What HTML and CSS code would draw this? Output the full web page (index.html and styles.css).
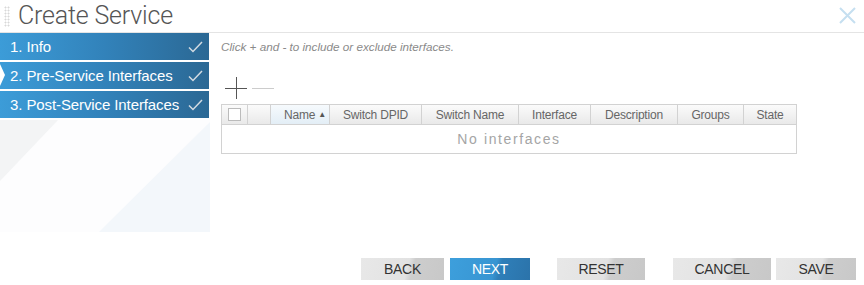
FILE: index.html
```html
<!DOCTYPE html>
<html>
<head>
<meta charset="utf-8">
<link rel="stylesheet" href="styles.css">
</head>
<body>
<div class="header">
  <div class="grip"></div>
  <div class="title">Create Service</div>
  <svg class="close" width="17" height="17" viewBox="0 0 17 17"><path d="M1 1L16 16M16 1L1 16" stroke="#c5dff0" stroke-width="2"/></svg>
</div>
<div class="main">
  <div class="sidebar">
    <div class="step"><span>1. Info</span><svg class="check" width="15" height="12" viewBox="0 0 15 12"><path d="M1 6.5L5 10.5L14 1" fill="none" stroke="#d3dbe2" stroke-width="1.5"/></svg></div>
    <div class="step active"><span>2. Pre-Service Interfaces</span><svg class="check" width="15" height="12" viewBox="0 0 15 12"><path d="M1 6.5L5 10.5L14 1" fill="none" stroke="#d3dbe2" stroke-width="1.5"/></svg></div>
    <div class="step"><span>3. Post-Service Interfaces</span><svg class="check" width="15" height="12" viewBox="0 0 15 12"><path d="M1 6.5L5 10.5L14 1" fill="none" stroke="#d3dbe2" stroke-width="1.5"/></svg></div>
    <svg class="filler" width="210" height="112" viewBox="0 0 210 112"><rect width="210" height="112" fill="#fdfdfe"/><polygon points="0,0 58,0 0,61" fill="#f3f4f5"/><polygon points="210,2 210,112 99,112" fill="#f3f7fb"/></svg>
  </div>
  <div class="content">
    <div class="hint">Click + and - to include or exclude interfaces.</div>
    <div class="tools">
      <svg width="22" height="22" viewBox="0 0 22 22"><path d="M0 11.5H22M11.5 0V22" stroke="#555" stroke-width="1"/></svg>
      <svg width="22" height="22" viewBox="0 0 22 22"><path d="M0 11.5H22" stroke="#ccc" stroke-width="1"/></svg>
    </div>
    <div class="table">
      <div class="thead">
        <div class="th c0"><span class="cb"></span></div>
        <div class="th c1"></div>
        <div class="th c2 sorted">Name <span class="arrow">▲</span></div>
        <div class="th c3">Switch DPID</div>
        <div class="th c4">Switch Name</div>
        <div class="th c5">Interface</div>
        <div class="th c6">Description</div>
        <div class="th c7">Groups</div>
        <div class="th c8">State</div>
      </div>
      <div class="empty">No interfaces</div>
    </div>
  </div>
</div>
<div class="footer">
  <div class="btn">BACK</div>
  <div class="btn primary next">NEXT</div>
  <div class="btn wide reset">RESET</div>
  <div class="btn cancel">CANCEL</div>
  <div class="btn save">SAVE</div>
</div>
</body>
</html>
```
FILE: styles.css
```css
html, body { margin: 0; padding: 0; }
body {
  width: 864px;
  height: 285px;
  background: #fff;
  font-family: "Liberation Sans", Arial, sans-serif;
  overflow: hidden;
}
.header {
  height: 32px;
  border-bottom: 1px solid #e4e4e4;
  display: flex;
  align-items: center;
  position: relative;
}
.grip {
  width: 6px;
  height: 21px;
  margin-left: 4px;
  margin-top: 1px;
  background-image: radial-gradient(circle, #d8d8d8 0.9px, transparent 1.1px);
  background-size: 3px 3px;
}
.title {
  margin-left: 8px;
  font-family: Roboto, "Liberation Sans", sans-serif;
  font-weight: 300;
  font-size: 25px;
  color: #555;
  letter-spacing: -0.2px;
  line-height: 32px;
}
.close { margin-left: auto; margin-right: 8px; margin-top: -1px; }
.main { display: flex; height: 225px; }
.sidebar { width: 209px; flex: none; display: flex; flex-direction: column; }
.step {
  height: 27px;
  margin-bottom: 2px;
  background: linear-gradient(90deg, #3c9cd8 0%, #3282ba 50%, #2b6894 100%);
  color: #fff;
  font-size: 15px;
  letter-spacing: -0.1px;
  display: flex;
  align-items: center;
  padding-left: 10px;
  padding-right: 6px;
  position: relative;
}
.step span { flex: 1; white-space: nowrap; }
.step.active::before {
  content: "";
  position: absolute;
  left: 0;
  top: 2px;
  border-left: 5px solid #fff;
  border-top: 11.5px solid transparent;
  border-bottom: 11.5px solid transparent;
}
.filler { display: block; margin-top: 0; }
.content { flex: 1; padding-left: 12px; padding-top: 7px; }
.hint {
  font-size: 11.7px;
  font-style: italic;
  color: #8a8a8a;
  line-height: 14px;
}
.tools { display: flex; gap: 5px; margin-top: 23px; margin-left: 4px; height: 22px; }
.table {
  width: 574px;
  border: 1px solid #d2d2d2;
  margin-top: 5px;
}
.thead { display: flex; height: 19px; border-bottom: 1px solid #d2d2d2; }
.th {
  box-sizing: border-box;
  border-right: 1px solid #d2d2d2;
  background: linear-gradient(#fbfbfb, #e9e9e9);
  font-size: 12px;
  color: #666;
  display: flex;
  align-items: center;
  justify-content: center;
  letter-spacing: -0.2px;
}
.th:last-child { border-right: none; }
.th.sorted { background: linear-gradient(#f6fafd, #e3eef6); justify-content: flex-end; padding-right: 3px; }
.arrow { font-size: 8px; margin-left: 3px; color: #555; }
.cb { width: 11px; height: 11px; border: 1px solid #bbb; background: #fff; }
.c0 { width: 26px; }
.c1 { width: 23px; }
.c2 { width: 59px; }
.c3 { width: 92px; }
.c4 { width: 97px; }
.c5 { width: 72px; }
.c6 { width: 87px; }
.c7 { width: 66px; }
.c8 { width: 52px; }
.empty {
  height: 28px;
  line-height: 28px;
  text-align: center;
  font-size: 14px;
  color: #a5a5a5;
  letter-spacing: 1.6px;
}
.footer { display: flex; padding-left: 361px; height: 22px; }
.btn {
  width: 83px;
  height: 22px;
  line-height: 22px;
  text-align: center;
  font-size: 14px;
  color: #333;
  letter-spacing: -0.3px;
  background: linear-gradient(105deg, #e8e8e8 0%, #e2e2e2 55%, #cdcdcd 62%, #c8c8c8 100%);
}
.btn.primary { color: #fff; background: linear-gradient(105deg, #3d9fdc 0%, #3895d2 55%, #2f7fb9 62%, #2b73aa 100%); }
.next { margin-left: 6px; width: 80px; }
.reset { margin-left: 27px; width: 88px; }
.cancel { margin-left: 28px; width: 98px; }
.save { margin-left: 5px; width: 80px; }
```
